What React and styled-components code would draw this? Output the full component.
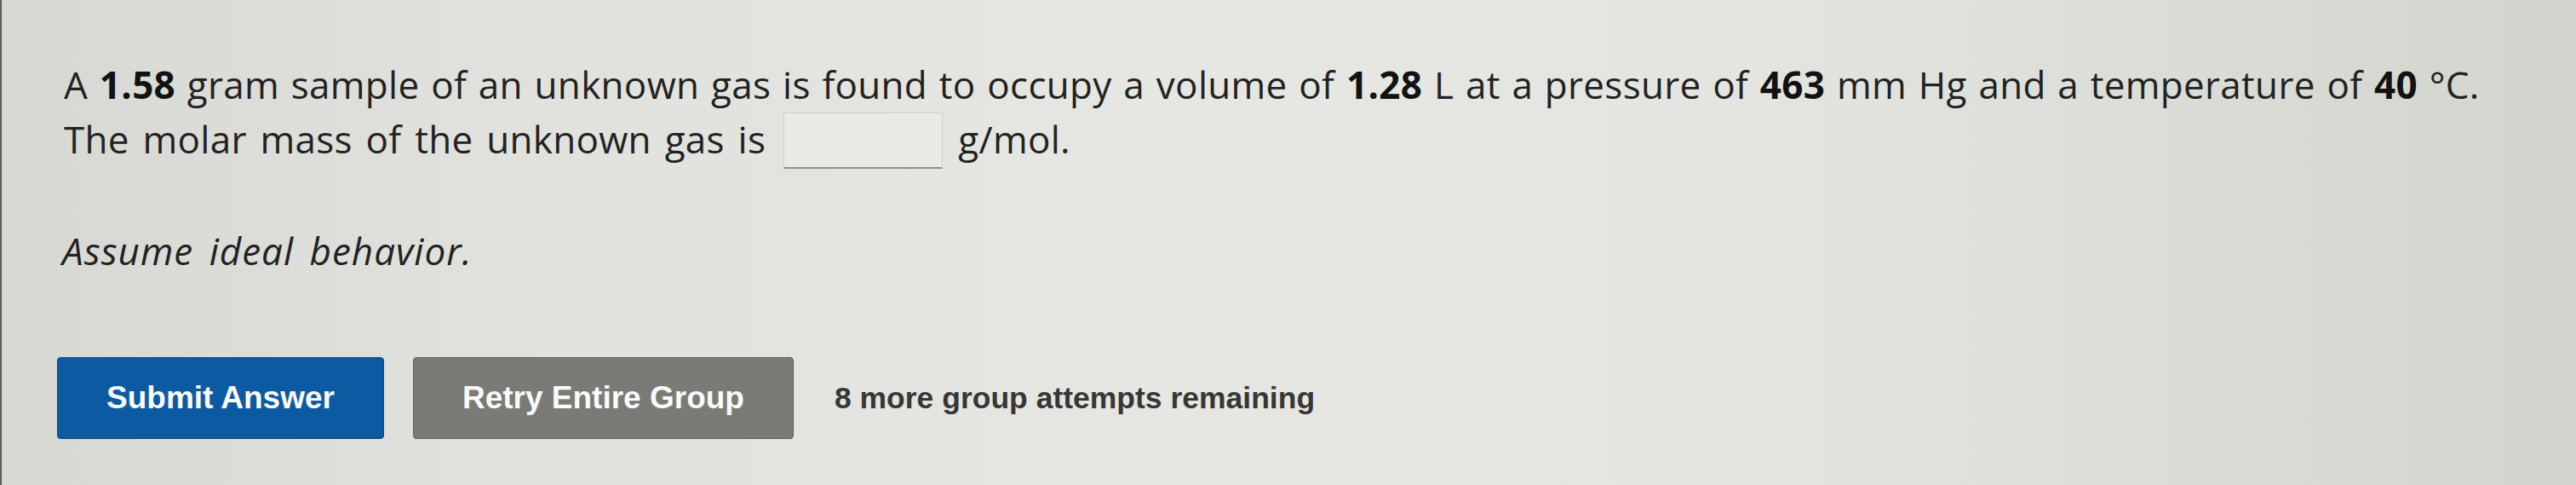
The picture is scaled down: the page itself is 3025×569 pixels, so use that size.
import React from 'react';
import styled, { createGlobalStyle } from 'styled-components';

const GlobalStyle = createGlobalStyle`
body {
  margin: 0;
  background: #e2e3de;
}
`;

const Page = styled.main`
box-sizing: border-box;
min-height: 569px;
width: 3025px;
padding: 67px 0 0 73px;
border-left: 2px solid #5c5d5a;
background: linear-gradient(90deg, #d7d8d3 0%, #e0e1dc 18%, #e6e7e2 45%, #e4e5e0 68%, #d2d4ce 100%);
font-family: "Open Sans", "DejaVu Sans", sans-serif;
color: #222222;
`;

const Prompt = styled.p`
margin: 0;
font-size: 44px;
line-height: 64px;
letter-spacing: 0.3px;
`;

const Line = styled.span`
display: block;
word-spacing: ${p => p.$spread || 2}px;
white-space: nowrap;
`;

const Num = styled.strong`
font-weight: 700;
color: #121212;
`;

const AnswerBox = styled.span`
display: inline-block;
box-sizing: border-box;
width: 187px;
height: 66px;
margin: 0 18px 0 21px;
vertical-align: -18px;
background: #e9eae6;
border: 1px solid #cfd0cb;
border-bottom: 2px solid #8f908c;
`;

const Note = styled.p`
margin: 64px 0 0 -2px;
font-size: 44px;
line-height: 64px;
font-style: italic;
letter-spacing: 1px;
word-spacing: 6px;
`;

const Actions = styled.div`
display: flex;
align-items: center;
gap: 34px;
margin: 93px 0 0 -8px;
`;

const Button = styled.button`
box-sizing: border-box;
height: 96px;
padding: 0 57px;
border-radius: 4px;
border: 1px solid ${p => (p.$primary ? '#094780' : '#5e5f5c')};
background: ${p => (p.$primary ? '#0c5ba2' : '#7a7b77')};
color: #fafafa;
font-family: "Liberation Sans", Arial, sans-serif;
font-weight: 700;
font-size: 37px;
cursor: pointer;
`;

const Status = styled.span`
margin-left: 14px;
font-family: "Liberation Sans", Arial, sans-serif;
font-weight: 700;
font-size: 35.5px;
color: #383636;
`;

const App = () => {
    return (
        <>
            <GlobalStyle />
            <Page>
                <Prompt>
                    <Line>
                        A <Num>1.58</Num> gram sample of an unknown gas is found to occupy a volume of <Num>1.28</Num> L at a pressure of <Num>463</Num> mm Hg and a temperature of <Num>40</Num> °C.
                    </Line>
                    <Line $spread={4}>
                        The molar mass of the unknown gas is<AnswerBox />g/mol.
                    </Line>
                </Prompt>
                <Note>Assume ideal behavior.</Note>
                <Actions>
                    <Button $primary>Submit Answer</Button>
                    <Button>Retry Entire Group</Button>
                    <Status>8 more group attempts remaining</Status>
                </Actions>
            </Page>
        </>
    );
};

export default App;
